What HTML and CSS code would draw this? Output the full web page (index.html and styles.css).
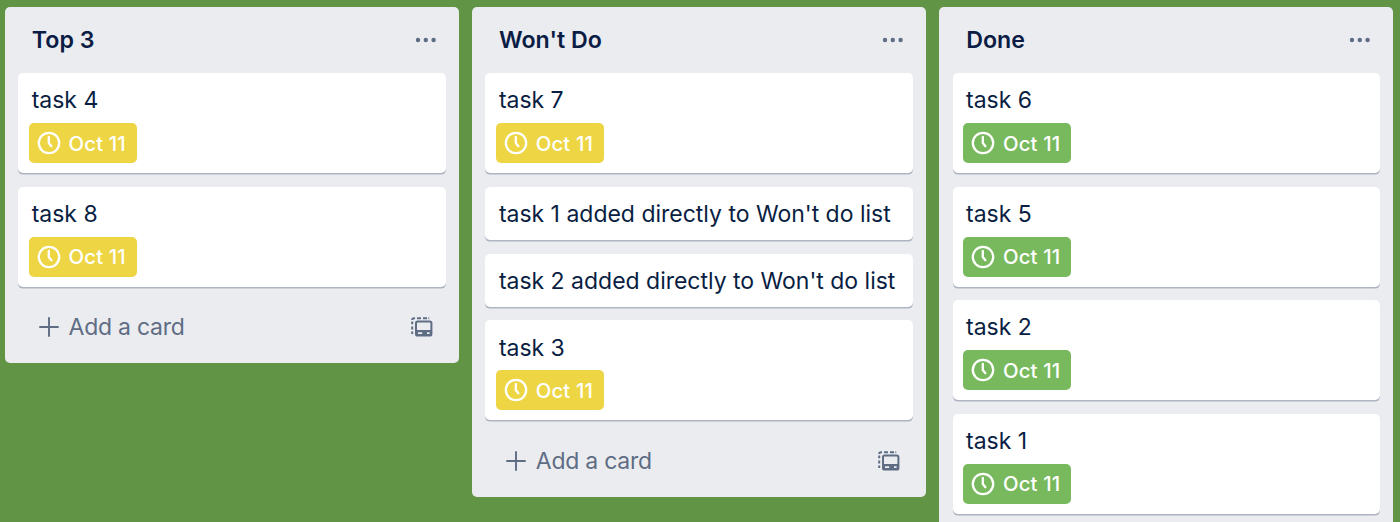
FILE: index.html
```
<!DOCTYPE html>
<html lang="en">
  <head>
    <meta charset="UTF-8">
    <meta name="viewport" content="width=device-width, initial-scale=1.0">
    <title>Board</title>
    <link rel="stylesheet" href="styles.css">
  </head>
  <body>
    <!-- shared icons -->
    <svg class="icons">
      <symbol id="dots" viewBox="0 0 22 6">
        <circle cx="3" cy="3" r="2.2"/>
        <circle cx="10.8" cy="3" r="2.2"/>
        <circle cx="18.6" cy="3" r="2.2"/>
      </symbol>
      <symbol id="clock" viewBox="0 0 24 24">
        <circle cx="12" cy="12" r="10.2" fill="none" stroke="currentColor" stroke-width="2.3"/>
        <path d="M11.8 6v6l2.6 3.2" fill="none" stroke="currentColor" stroke-width="2.3" stroke-linecap="round" stroke-linejoin="round"/>
      </symbol>
      <symbol id="plus" viewBox="0 0 20 20">
        <path d="M10 1v18M1 10h18" stroke="currentColor" stroke-width="1.9" stroke-linecap="round"/>
      </symbol>
      <symbol id="template" viewBox="0 0 22 20">
        <path d="M1.2 17v-2.5M1.2 12.4V9.4M1.2 7.3V4.6M1.2 3Q1.3 1.2 3 1.2H4M6 1.2h4M12 1.2h4M17.4 1.2h.8" fill="none" stroke="currentColor" stroke-width="2"/>
        <rect x="5" y="4.5" width="15.4" height="14" rx="1.6" fill="none" stroke="currentColor" stroke-width="2"/>
        <path d="M5 13h15.4v5.4H5z"/>
        <path d="M7 15.2h4.2v1.8H7zM16 15.2h2.6v1.8H16z" fill="#ebecf0"/>
      </symbol>
    </svg>

    <div id="board">
      <section class="list">
        <div class="list-header">
          <h2>Top 3</h2>
          <svg class="dots"><use href="#dots"/></svg>
        </div>
        <div class="card">
          <p>task 4</p>
          <span class="badge"><svg><use href="#clock"/></svg>Oct 11</span>
        </div>
        <div class="card">
          <p>task 8</p>
          <span class="badge"><svg><use href="#clock"/></svg>Oct 11</span>
        </div>
        <div class="list-footer">
          <svg class="plus"><use href="#plus"/></svg>
          <span>Add a card</span>
          <svg class="template"><use href="#template"/></svg>
        </div>
      </section>

      <section class="list">
        <div class="list-header">
          <h2>Won't Do</h2>
          <svg class="dots"><use href="#dots"/></svg>
        </div>
        <div class="card">
          <p>task 7</p>
          <span class="badge"><svg><use href="#clock"/></svg>Oct 11</span>
        </div>
        <div class="card">
          <p>task 1 added directly to Won't do list</p>
        </div>
        <div class="card">
          <p>task 2 added directly to Won't do list</p>
        </div>
        <div class="card">
          <p>task 3</p>
          <span class="badge"><svg><use href="#clock"/></svg>Oct 11</span>
        </div>
        <div class="list-footer">
          <svg class="plus"><use href="#plus"/></svg>
          <span>Add a card</span>
          <svg class="template"><use href="#template"/></svg>
        </div>
      </section>

      <section class="list full">
        <div class="list-header">
          <h2>Done</h2>
          <svg class="dots"><use href="#dots"/></svg>
        </div>
        <div class="card">
          <p>task 6</p>
          <span class="badge done"><svg><use href="#clock"/></svg>Oct 11</span>
        </div>
        <div class="card">
          <p>task 5</p>
          <span class="badge done"><svg><use href="#clock"/></svg>Oct 11</span>
        </div>
        <div class="card">
          <p>task 2</p>
          <span class="badge done"><svg><use href="#clock"/></svg>Oct 11</span>
        </div>
        <div class="card">
          <p>task 1</p>
          <span class="badge done"><svg><use href="#clock"/></svg>Oct 11</span>
        </div>
      </section>
    </div>
  </body>
</html>
```
FILE: styles.css
```
* {
  box-sizing: border-box;
}
body {
  margin: 0;
  background-color: #619445;
  font-family: Inter, "Liberation Sans", sans-serif;
  font-size: 23px;
  color: #091e42;
}
.icons {
  display: none;
}
svg {
  fill: currentColor;
  flex-shrink: 0;
}
#board {
  display: flex;
  align-items: flex-start;
  gap: 13.2px;
  height: 522px;
  padding: 7px 0 0 5px;
}
.list {
  width: 454px;
  flex-shrink: 0;
  padding: 0 13.3px;
  border-radius: 5px;
  background-color: #ebecf0;
}
.list.full {
  align-self: stretch;
  border-radius: 5px 5px 0 0;
}
.list-header {
  display: flex;
  align-items: center;
  justify-content: space-between;
  height: 66.3px;
  padding: 0 9px 0 13.5px;
}
.list-header h2 {
  margin: 0;
  font-size: 23.2px;
  font-weight: 600;
  color: #0b1d45;
}
.dots {
  width: 22px;
  height: 6px;
  color: #5e6c84;
}
.card {
  margin-bottom: 13.4px;
  padding: 11.2px 10px 8.8px 13.4px;
  border-radius: 5px;
  background-color: #fff;
  box-shadow: 0 1.6px 0 #aeb4c2;
}
.full .card:last-child {
  margin-bottom: 0;
}
.card p {
  margin: 0;
  line-height: 33.4px;
  letter-spacing: -0.01px;
  white-space: nowrap;
}
.badge {
  display: flex;
  align-items: center;
  gap: 8px;
  width: 108.5px;
  height: 40px;
  margin: 5.5px 0 1.2px -3.1px;
  padding-left: 8px;
  border-radius: 5px;
  background-color: #edd544;
  color: #fff;
  font-size: 20.3px;
  font-weight: 500;
  letter-spacing: 0.15px;
  white-space: nowrap;
}
.badge.done {
  background-color: #78b95d;
}
.badge svg {
  width: 24px;
  height: 24px;
}
.list-footer {
  display: flex;
  align-items: center;
  height: 63px;
  padding: 0 12.5px 9px 20.3px;
  color: #5e6c84;
}
.list-footer span {
  letter-spacing: -0.25px;
}
.plus {
  width: 20px;
  height: 20px;
  margin-right: 10px;
}
.template {
  width: 22px;
  height: 20px;
  margin-left: auto;
}
```
